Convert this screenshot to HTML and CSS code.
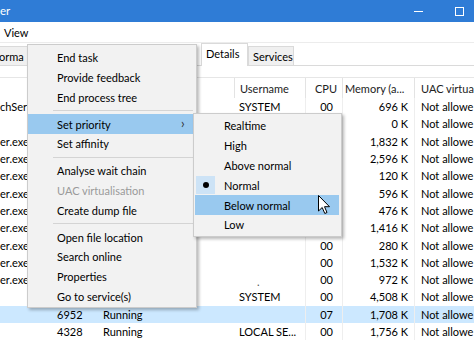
FILE: index.html
```html
<!DOCTYPE html>
<html>
<head>
<meta charset="utf-8">
<link rel="stylesheet" href="styles.css">
</head>
<body>
<div class="win">
  <div class="titlebar">
    <span class="ttext">er</span>
    <div class="ctrls">
      <span class="ctl-min"></span>
      <span class="ctl-max"></span>
    </div>
  </div>
  <div class="menubar"><span class="mitem">View</span></div>
  <div class="tabs">
    <div class="tab tab-perf">orma</div>
    <div class="tab tab-details">Details</div>
    <div class="tab tab-services">Services</div>
  </div>
  <div class="list">
    <div class="row hdr">
      <div class="c name"></div><div class="c pid"></div><div class="c status"></div>
      <div class="c user">Username</div><div class="c cpu">CPU</div><div class="c mem">Memory (a...</div><div class="c uac">UAC virtua</div>
    </div>
    <div class="row"><div class="c name">chService</div><div class="c pid"></div><div class="c status"></div><div class="c user">SYSTEM</div><div class="c cpu">00</div><div class="c mem">696 K</div><div class="c uac">Not allowe</div></div>
    <div class="row"><div class="c name"></div><div class="c pid"></div><div class="c status"></div><div class="c user"></div><div class="c cpu">00</div><div class="c mem">0 K</div><div class="c uac">Not allowe</div></div>
    <div class="row"><div class="c name">er.exe</div><div class="c pid"></div><div class="c status"></div><div class="c user"></div><div class="c cpu">00</div><div class="c mem">1,832 K</div><div class="c uac">Not allowe</div></div>
    <div class="row"><div class="c name">er.exe</div><div class="c pid"></div><div class="c status"></div><div class="c user"></div><div class="c cpu">00</div><div class="c mem">2,596 K</div><div class="c uac">Not allowe</div></div>
    <div class="row"><div class="c name">er.exe</div><div class="c pid"></div><div class="c status"></div><div class="c user"></div><div class="c cpu">00</div><div class="c mem">120 K</div><div class="c uac">Not allowe</div></div>
    <div class="row"><div class="c name">er.exe</div><div class="c pid"></div><div class="c status"></div><div class="c user"></div><div class="c cpu">00</div><div class="c mem">596 K</div><div class="c uac">Not allowe</div></div>
    <div class="row"><div class="c name">er.exe</div><div class="c pid"></div><div class="c status"></div><div class="c user"></div><div class="c cpu">00</div><div class="c mem">476 K</div><div class="c uac">Not allowe</div></div>
    <div class="row"><div class="c name">er.exe</div><div class="c pid"></div><div class="c status"></div><div class="c user"></div><div class="c cpu">00</div><div class="c mem">1,416 K</div><div class="c uac">Not allowe</div></div>
    <div class="row"><div class="c name">er.exe</div><div class="c pid"></div><div class="c status"></div><div class="c user"></div><div class="c cpu">00</div><div class="c mem">280 K</div><div class="c uac">Not allowe</div></div>
    <div class="row"><div class="c name">er.exe</div><div class="c pid"></div><div class="c status"></div><div class="c user"></div><div class="c cpu">00</div><div class="c mem">1,532 K</div><div class="c uac">Not allowe</div></div>
    <div class="row"><div class="c name">er.exe</div><div class="c pid"></div><div class="c status"></div><div class="c user"><span class="dot">.</span></div><div class="c cpu">00</div><div class="c mem">972 K</div><div class="c uac">Not allowe</div></div>
    <div class="row"><div class="c name"></div><div class="c pid"></div><div class="c status"></div><div class="c user">SYSTEM</div><div class="c cpu">00</div><div class="c mem">4,508 K</div><div class="c uac">Not allowe</div></div>
    <div class="row sel"><div class="c name"></div><div class="c pid">6952</div><div class="c status">Running</div><div class="c user"></div><div class="c cpu">07</div><div class="c mem">1,708 K</div><div class="c uac">Not allowe</div></div>
    <div class="row"><div class="c name"></div><div class="c pid">4328</div><div class="c status">Running</div><div class="c user">LOCAL SE...</div><div class="c cpu">00</div><div class="c mem">1,756 K</div><div class="c uac">Not allowe</div></div>
  </div>

  <div class="ctx">
    <div class="mi">End task</div>
    <div class="mi">Provide feedback</div>
    <div class="mi">End process tree</div>
    <div class="sep"></div>
    <div class="mi hot">Set priority<span class="arrow">&#8250;</span></div>
    <div class="mi">Set affinity</div>
    <div class="sep"></div>
    <div class="mi">Analyse wait chain</div>
    <div class="mi dis">UAC virtualisation</div>
    <div class="mi">Create dump file</div>
    <div class="sep"></div>
    <div class="mi">Open file location</div>
    <div class="mi">Search online</div>
    <div class="mi">Properties</div>
    <div class="mi">Go to service(s)</div>
  </div>

  <div class="sub">
    <div class="si">Realtime</div>
    <div class="si">High</div>
    <div class="si">Above normal</div>
    <div class="si checked"><span class="chk"><span class="bullet"></span></span>Normal</div>
    <div class="si hot">Below normal</div>
    <div class="si">Low</div>
  </div>

  <svg class="cursor" width="13" height="20" viewBox="0 0 13 20">
    <path d="M0.5 0.5 L0.5 16 L4.2 12.5 L6.8 18.5 L9 17.5 L6.5 11.7 L11.5 11.7 Z" fill="#fff" stroke="#000" stroke-width="1" stroke-linejoin="miter"/>
  </svg>
</div>
</body>
</html>
```

FILE: styles.css
```css
* { box-sizing: border-box; }
html, body { margin: 0; padding: 0; }
body {
  width: 474px;
  height: 342px;
  overflow: hidden;
  background: #fff;
  font-family: "Lato", "Noto Sans", sans-serif;
  font-size: 11px;
  color: #000;
}
.win { position: relative; width: 474px; height: 342px; overflow: hidden; }

.titlebar {
  height: 22px;
  background: #2f7cd6;
  color: #fff;
  display: flex;
  align-items: center;
  justify-content: space-between;
}
.ttext { font-size: 11.5px; line-height: 22px; }
.ctrls { display: flex; align-items: center; height: 22px; }
.ctl-min { width: 9px; height: 1px; background: #fff; margin-right: 32px; margin-top: 1px; }
.ctl-max { width: 9px; height: 9px; border: 1px solid #fff; margin-right: 10px; }

.menubar {
  height: 21px;
  display: flex;
  align-items: center;
  border-bottom: 1px solid #ececec;
}
.mitem { padding-left: 4px; }

.tabs {
  height: 23px;
  display: flex;
  align-items: flex-end;
  border-bottom: 1px solid #dadada;
  background: #fff;
}
.tab {
  height: 19px;
  background: #f0f0f0;
  border: 1px solid #dadada;
  border-bottom: none;
  display: flex;
  align-items: center;
  padding: 0 4px;
}
.tab-perf { width: 60px; padding-left: 0; margin-left: -1px; border-left: none; }
.tab-details {
  margin-left: 142px;
  height: 23px;
  background: #fff;
  margin-bottom: -1px;
  width: 47px;
  padding-bottom: 3px;
}
.tab-services { width: 46px; }

.list { padding-top: 11px; }
.row {
  display: grid;
  grid-template-columns: 52px 46px 136px 71px 37px 72px 60px;
  height: 17.3px;
  align-items: stretch;
  white-space: nowrap;
}
.row.hdr { height: 21px; border-top: 1px solid #e6e6e6; }
.row.sel { background: #cce8ff; }
.c {
  overflow: hidden;
  display: flex;
  align-items: center;
  line-height: 1;
}
.pid { padding-left: 5px; }
.status { padding-left: 5px; }
.user { padding-left: 5px; }
.cpu { justify-content: flex-end; padding-right: 9px; border-left: 1px solid #eeeeee; }
.mem { justify-content: flex-end; padding-right: 6px; border-left: 1px solid #eeeeee; }
.uac { padding-left: 6px; border-left: 1px solid #eeeeee; }
.hdr .user { border-left: 1px solid #e3e3e3; }
.hdr .cpu { padding-right: 5px; border-left-color: #e3e3e3; }
.hdr .mem { justify-content: flex-start; padding-left: 2px; padding-right: 0; border-left-color: #e3e3e3; }
.hdr .uac { border-left-color: #e3e3e3; }
.hdr .c { color: #222; }
.dot { position: relative; top: 2px; left: 18px; color: #555; }

/* context menu */
.ctx {
  position: absolute;
  left: 27px;
  top: 44px;
  width: 170px;
  height: 264px;
  background: #f2f2f2;
  border: 1px solid #cccccc;
  box-shadow: 2px 2px 3px rgba(0,0,0,0.28);
  padding: 3px 3px 2px 0;
}
.mi {
  height: 19.7px;
  display: flex;
  align-items: center;
  padding-left: 29px;
  position: relative;
}
.mi.hot { background: #99c9ef; }
.mi.dis { color: #9a9a9a; }
.arrow { position: absolute; left: 153px; top: 1px; font-size: 13px; color: #333; }
.sep {
  height: 7.3px;
  margin-left: 25px;
  position: relative;
}
.sep::after {
  content: "";
  position: absolute;
  left: 0; right: 0; top: 3px;
  height: 1px;
  background: #d4d4d4;
}

/* submenu */
.sub {
  position: absolute;
  left: 193px;
  top: 113px;
  width: 149px;
  height: 124px;
  background: #f2f2f2;
  border: 1px solid #cccccc;
  box-shadow: 2px 2px 3px rgba(0,0,0,0.28);
  padding: 2px 2px 0 1px;
}
.si {
  height: 19.8px;
  display: flex;
  align-items: center;
  padding-left: 29px;
  position: relative;
}
.si.hot { background: #99c9ef; }
.chk {
  position: absolute;
  left: 1px; top: 1px;
  width: 19px; height: 18px;
  background: #cde3f6;
  display: flex;
  align-items: center;
  justify-content: center;
}
.bullet { width: 6px; height: 6px; border-radius: 50%; background: #000; }

.cursor { position: absolute; left: 318px; top: 195px; }
```
